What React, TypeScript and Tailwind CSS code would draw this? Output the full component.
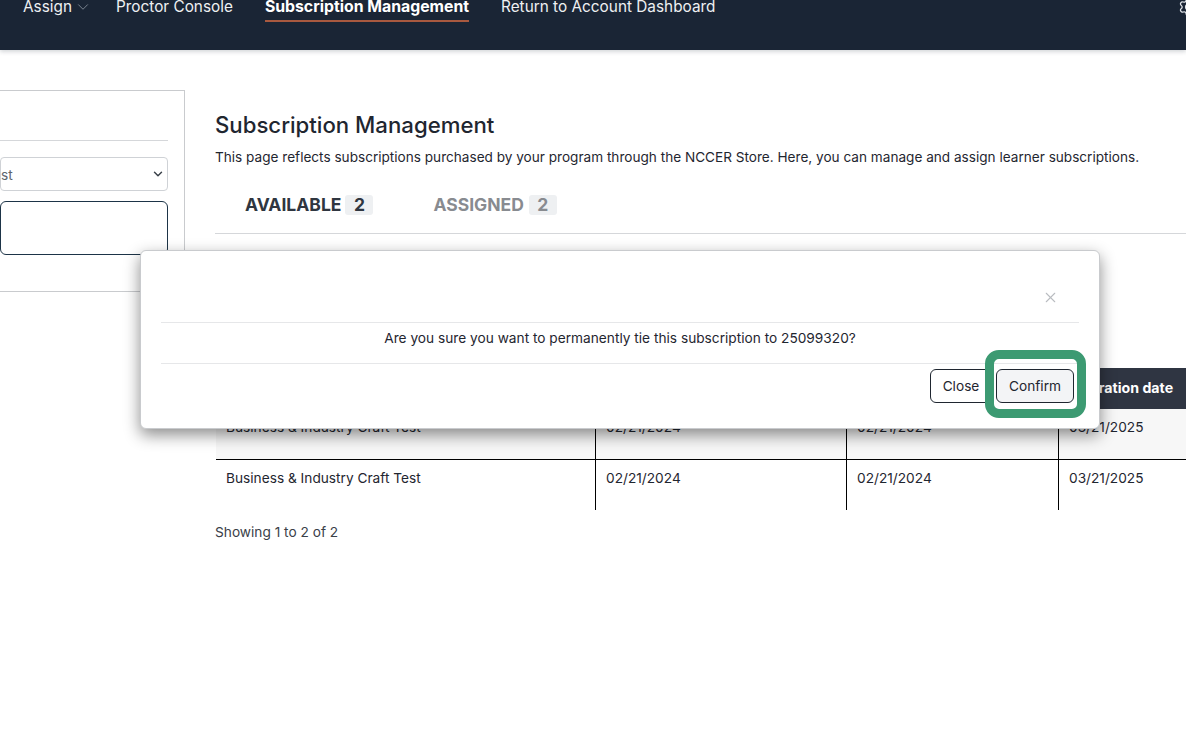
import { ChevronDown, Settings, X } from 'lucide-react';

const columns = 'grid grid-cols-[379px_251px_212px_160px]';

const rows = [
  { name: 'Business & Industry Craft Test', first: '02/21/2024', second: '02/21/2024', expires: '03/21/2025', shaded: true },
  { name: 'Business & Industry Craft Test', first: '02/21/2024', second: '02/21/2024', expires: '03/21/2025', shaded: false },
];

function TopNav() {
  return (
    <header className="relative z-10 flex h-[50px] shrink-0 items-start overflow-hidden bg-[#1a2535] pl-[23px] text-[15.35px] leading-[24px] text-[#eef0f2] shadow-[0_2px_4px_rgba(26,37,53,0.18)]">
      <div className="-mt-[5px] flex items-center">
        <span>Assign</span>
        <ChevronDown className="ml-[2px] h-[18px] w-[18px] text-[#9aa3ad]" strokeWidth={1} />
      </div>
      <span className="-mt-[5px] ml-[24px]">Proctor Console</span>
      <span className="-mt-[5px] ml-[32px] border-b-2 border-[#a8593f] pb-px text-[15.8px] font-bold text-white">Subscription Management</span>
      <span className="-mt-[5px] ml-[32px]">Return to Account Dashboard</span>
      <Settings className="absolute top-[-3px] left-[1178px] h-[20px] w-[20px] text-[#dfe3e8]" strokeWidth={1.5} />
    </header>
  );
}

function Sidebar() {
  return (
    <aside className="mt-10 h-[202px] w-[185px] shrink-0 overflow-hidden border-t border-r border-b border-[#c9cbce] pr-4">
      <div className="mt-[49px] border-t border-[#d5d7da]" />
      <div className="mt-4 flex h-[34px] items-center overflow-hidden rounded-[4px] border border-[#cfd2d6] pr-[2px] text-[13.7px] text-[#5d646c]">
        <span className="-ml-[183px] flex-1 pt-[2px] whitespace-nowrap">Business &amp; Industry Craft Test</span>
        <ChevronDown className="h-[14px] w-[14px] text-[#3c434b]" strokeWidth={2.5} />
      </div>
      <div className="mt-[10px] h-[54px] rounded-[6px] border border-[#1d3447]" />
    </aside>
  );
}

function SubscriptionTable() {
  return (
    <div className="ml-px w-[1002px] text-[13.7px] text-[#1f2630]">
      <div className={`${columns} h-[41px] items-center bg-[#2f3542] pb-[2px] font-bold text-white`}>
        <span />
        <span />
        <span />
        <span className="pl-[11px] text-[14.2px] whitespace-nowrap">Expiration date</span>
      </div>
      {rows.map((row, i) => (
        <div key={i} className={`${columns} ${row.shaded ? 'h-[51px] border-b border-black bg-[#f7f7f7]' : 'h-[50px]'}`}>
          <span className="pt-2 pl-[10px]">{row.name}</span>
          <span className="border-l border-black pt-2 pl-[10px]">{row.first}</span>
          <span className="border-l border-black pt-2 pl-[10px]">{row.second}</span>
          <span className="border-l border-black pt-2 pl-[10px]">{row.expires}</span>
        </div>
      ))}
    </div>
  );
}

function ConfirmModal() {
  return (
    <div className="absolute top-[250px] left-[140px] z-20 flex h-[179px] w-[960px] flex-col rounded-[6px] border border-[#c9cbce] bg-white px-[20px] shadow-[0_6px_16px_rgba(0,0,0,0.45)]">
      <div className="flex h-[72px] shrink-0 items-start justify-end border-b border-[#e6e7e9] pt-[38px] pr-[20px]">
        <X className="h-[17px] w-[17px] text-[#b9bcc0]" strokeWidth={1.5} />
      </div>
      <p className="h-[41px] shrink-0 border-b border-[#e6e7e9] pt-[5px] text-center text-[13.7px] leading-[20px] text-[#1f2630]">
        Are you sure you want to permanently tie this subscription to 25099320?
      </p>
      <div className="mt-[5px] flex justify-end gap-1 pr-[5px] text-[13.7px] text-[#1f2630]">
        <button className="h-[34px] w-[62px] rounded-[6px] border border-[#1f2630] bg-white">Close</button>
        <button className="h-[34px] w-[78px] rounded-[6px] border border-[#1f2630] bg-[#f3f4f6]">Confirm</button>
      </div>
      {/* Green callout around the confirm button */}
      <div className="absolute top-[99px] left-[844px] h-[68px] w-[101px] rounded-[14px] border-[9px] border-[#3c9a72]" />
    </div>
  );
}

export default function App() {
  return (
    <div className="relative flex h-[748px] w-[1186px] flex-col overflow-hidden bg-white font-['Inter',sans-serif]">
      <TopNav />
      <div className="flex min-h-0 flex-1">
        <Sidebar />
        <main className="min-w-0 flex-1 overflow-hidden pt-[60px] pl-[30px]">
          <h1 className="text-[22.2px] leading-[30px] font-medium whitespace-nowrap text-[#1f2630]">Subscription Management</h1>
          <p className="mt-[7px] text-[13.6px] leading-[20px] whitespace-nowrap text-[#1f2630]">
            This page reflects subscriptions purchased by your program through the NCCER Store. Here, you can manage and assign learner subscriptions.
          </p>
          <div className="mt-[14px] flex h-[53px] w-[1003px] items-start border-b border-[#d5d7da] pt-[12px] pl-[30px] text-[17.5px] leading-[24px] font-bold">
            <div className="flex items-center gap-[4px] text-[#2f3640]">
              AVAILABLE
              <span className="rounded-[3px] bg-[#eef0f2] px-[8.5px] leading-[20px]">2</span>
            </div>
            <div className="ml-[60px] flex items-center gap-[5px] text-[#888b90]">
              ASSIGNED
              <span className="rounded-[3px] bg-[#eef0f2] px-[8.5px] leading-[20px]">2</span>
            </div>
          </div>
          <div className="mt-[134px]">
            <SubscriptionTable />
          </div>
          <p className="mt-[12px] text-[13.7px] leading-[20px] text-[#3a4048]">Showing 1 to 2 of 2</p>
        </main>
      </div>
      <ConfirmModal />
    </div>
  );
}
